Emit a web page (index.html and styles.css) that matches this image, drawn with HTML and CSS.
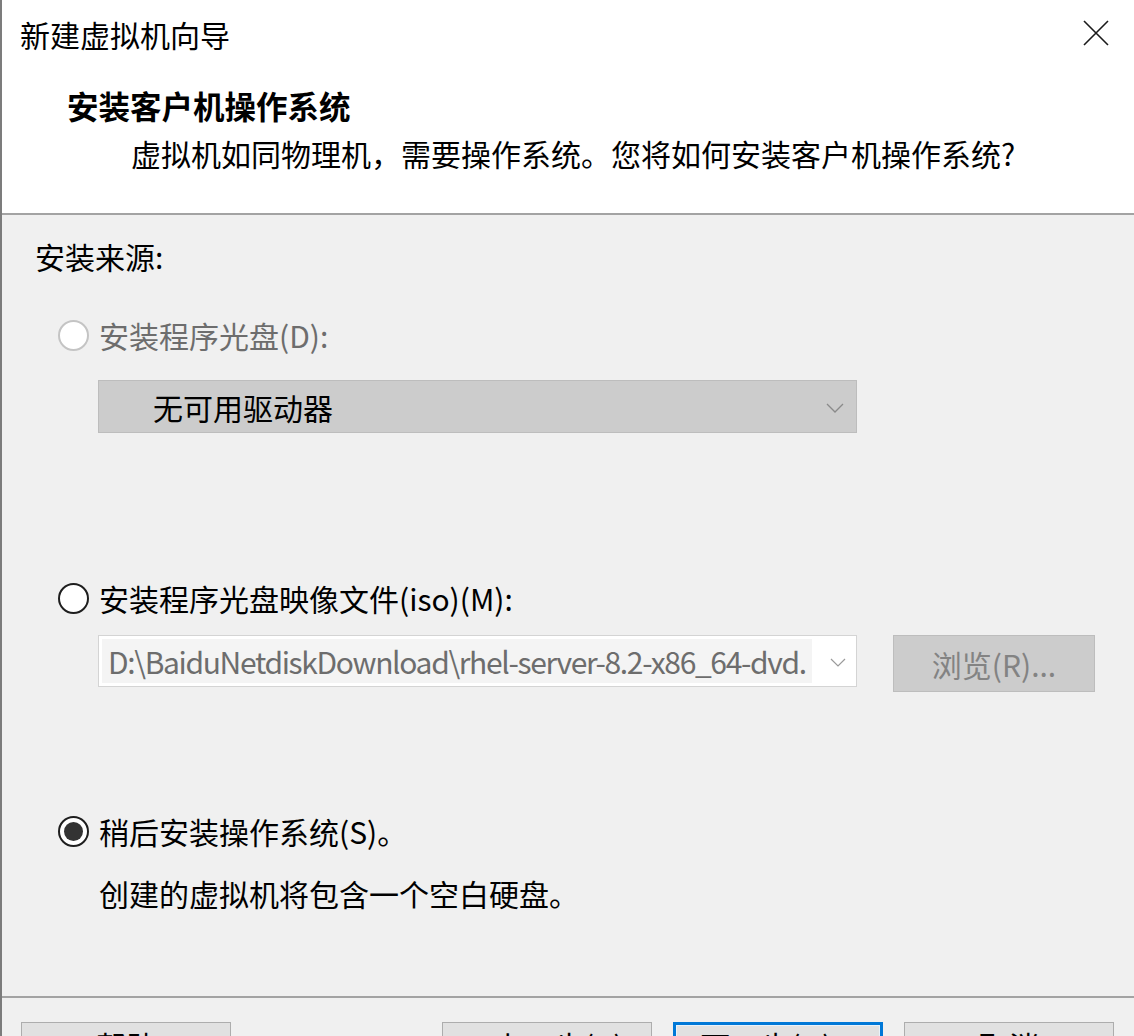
FILE: index.html
```html
<!DOCTYPE html>
<html lang="zh-CN">
<head>
  <meta charset="UTF-8">
  <title>新建虚拟机向导</title>
  <link rel="stylesheet" href="styles.css">
</head>
<body>
  <div class="window">
    <!-- Header -->
    <div class="header">
      <div class="titlebar">
        <span class="title">新建虚拟机向导</span>
        <svg class="close" width="28" height="28" viewBox="0 0 28 28">
          <path d="M2 2 L26 26 M26 2 L2 26" stroke="#1a1a1a" stroke-width="1.6" fill="none"/>
        </svg>
      </div>
      <div class="heading">安装客户机操作系统</div>
      <div class="subtitle">虚拟机如同物理机，需要操作系统。您将如何安装客户机操作系统?</div>
    </div>

    <!-- Install source -->
    <div class="content">
      <div class="section-label">安装来源:</div>

      <div class="radio-row disabled row-disc">
        <span class="radio"></span>
        <span class="radio-text">安装程序光盘(D):</span>
      </div>
      <div class="select disabled-select">
        <span class="select-text">无可用驱动器</span>
        <svg class="chevron" width="18" height="10" viewBox="0 0 18 10">
          <path d="M1 1 L9 9 L17 1" stroke="#8a8a8a" stroke-width="1.3" fill="none"/>
        </svg>
      </div>

      <div class="radio-row row-iso">
        <span class="radio"></span>
        <span class="radio-text">安装程序光盘映像文件(iso)(M):</span>
      </div>
      <div class="iso-row">
        <div class="select iso-select">
          <span class="select-text iso-path">D:\BaiduNetdiskDownload\rhel-server-8.2-x86_64-dvd.</span>
          <svg class="chevron" width="16" height="9" viewBox="0 0 16 9">
            <path d="M1 1 L8 8 L15 1" stroke="#9a9a9a" stroke-width="1.2" fill="none"/>
          </svg>
        </div>
        <div class="browse">浏览(R)...</div>
      </div>

      <div class="radio-row row-later">
        <span class="radio checked"></span>
        <span class="radio-text">稍后安装操作系统(S)。</span>
      </div>
      <div class="note">创建的虚拟机将包含一个空白硬盘。</div>
    </div>

    <!-- Buttons -->
    <div class="footer">
      <div class="btn help">帮助</div>
      <div class="btn">&lt; 上一步(B)</div>
      <div class="btn primary">下一步(N) &gt;</div>
      <div class="btn">取消</div>
    </div>
  </div>
</body>
</html>
```

FILE: styles.css
```css
html, body {
  margin: 0;
  padding: 0;
  height: 100%;
  overflow: hidden;
}

body {
  font-family: "Noto Sans CJK SC", "Noto Sans", sans-serif;
  font-size: 30px;
  color: #000;
  background-color: #f0f0f0;
}

.window {
  border-left: 2px solid #7c7c7c;
  min-height: 100vh;
  box-sizing: border-box;
}

.header {
  background-color: #fff;
  border-bottom: 2px solid #a3a3a3;
  height: 215px;
  box-sizing: border-box;
}

.titlebar {
  height: 68px;
  display: flex;
  align-items: center;
  justify-content: space-between;
  padding: 0 24px 0 18px;
}

.title {
  line-height: 40px;
}

.close {
  margin-top: -2px;
}

.heading {
  font-weight: 700;
  font-size: 31.5px;
  line-height: 40px;
  margin-top: 17px;
  padding-left: 65px;
}

.subtitle {
  line-height: 40px;
  margin-top: 8px;
  padding-left: 129px;
}

.content {
  height: 783px;
  border-bottom: 2px solid #a3a3a3;
  box-sizing: border-box;
  padding-top: 21px;
}

.section-label {
  line-height: 40px;
  padding-left: 33px;
}

.radio-row {
  display: flex;
  align-items: center;
  height: 40px;
  padding-left: 56px;
}

.row-disc {
  margin-top: 39px;
}

.row-iso {
  margin-top: 145px;
}

.row-later {
  margin-top: 119px;
}

.radio {
  width: 31px;
  height: 31px;
  border: 2px solid #1e1e1e;
  border-radius: 50%;
  background-color: #fff;
  box-sizing: border-box;
  margin-right: 10px;
  position: relative;
  flex-shrink: 0;
}

.radio.checked::after {
  content: "";
  position: absolute;
  left: 4px;
  top: 4px;
  width: 19px;
  height: 19px;
  border-radius: 50%;
  background-color: #333;
}

.disabled .radio {
  border: 2px solid #c4c4c4;
}

.disabled .radio-text {
  color: #6d6d6d;
}

.radio-text {
  line-height: 40px;
}

.select {
  display: flex;
  align-items: center;
  justify-content: space-between;
  box-sizing: border-box;
  width: 759px;
}

.disabled-select {
  margin: 25px 0 0 96px;
  height: 53px;
  background-color: #cccccc;
  border: 1px solid #bdbdbd;
  padding: 0 12px 0 54px;
}

.disabled-select .chevron {
  margin-top: 2px;
}

.iso-row {
  display: flex;
  align-items: flex-start;
  margin: 17px 0 0 96px;
}

.iso-select {
  height: 52px;
  background-color: #fff;
  border: 1px solid #d4d4d4;
  padding: 0 10px 0 3px;
}

.iso-path {
  color: #6d6d6d;
  background-color: #f4f4f4;
  padding: 0 6px;
  line-height: 44px;
  white-space: nowrap;
  overflow: hidden;
  letter-spacing: -1.35px;
}

.iso-select .chevron {
  flex-shrink: 0;
  margin-top: 2px;
}

.browse {
  margin-left: 36px;
  width: 202px;
  height: 57px;
  box-sizing: border-box;
  background-color: #cccccc;
  border: 1px solid #bdbdbd;
  color: #838383;
  display: flex;
  align-items: center;
  justify-content: center;
}

.note {
  margin-top: 22px;
  line-height: 40px;
  padding-left: 97px;
}

.footer {
  display: flex;
  gap: 21px;
  padding: 24px 20px 0 19px;
}

.btn {
  width: 210px;
  height: 46px;
  box-sizing: border-box;
  background-color: #e1e1e1;
  border: 1px solid #adadad;
  display: flex;
  align-items: center;
  justify-content: center;
  line-height: 44px;
}

.btn.help {
  margin-right: auto;
}

.btn.primary {
  border: 3px solid #0078d7;
  box-shadow: inset 0 0 0 1px #e8f2fb;
}
```
